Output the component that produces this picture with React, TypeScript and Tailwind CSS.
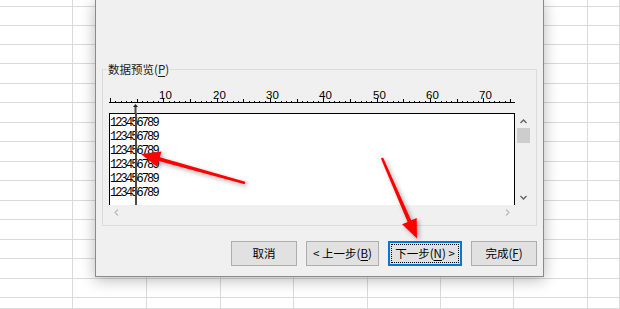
import React from "react";

const COLS = 9;
const ROWS = 17;
const ROWS_DATA = Array.from({ length: 6 }, () => "123456789");
const TICKS = Array.from({ length: 76 }, (_, i) => i);

function Ruler() {
  return (
    <svg width="408" height="27" className="block">
      <rect x="0" y="16" width="406" height="1" fill="#000" />
      {TICKS.map((i) => {
        const x = 1 + Math.round((i * 16) / 3);
        const h = i % 10 === 0 ? 4 : i % 5 === 0 ? 3 : 1;
        return <rect key={i} x={x} y={16 - h} width="1" height={h} fill="#000" />;
      })}
      {[10, 20, 30, 40, 50, 60, 70].map((n) => (
        <text
          key={n}
          x={1 + Math.round((n * 16) / 3) + 2.5}
          y="12.5"
          textAnchor="middle"
          fontSize="11.5"
          fontFamily="Liberation Sans, Arial, sans-serif"
          fill="#000"
        >
          {n}
        </text>
      ))}
      {/* column break marker */}
      <polygon points="26.5,18 24,21 29,21" fill="#222" />
      <rect x="25.5" y="21" width="2" height="6" fill="#4a4a4a" />
    </svg>
  );
}

function Chevron({ dir, color }: { dir: "up" | "down" | "left" | "right"; color: string }) {
  const pts =
    dir === "up"
      ? "0.5,4 3.5,1 6.5,4"
      : dir === "down"
      ? "0.5,1 3.5,4 6.5,1"
      : dir === "left"
      ? "4,0.5 1,3.5 4,6.5"
      : "1,0.5 4,3.5 1,6.5";
  const vertical = dir === "up" || dir === "down";
  return (
    <svg width={vertical ? 7 : 5} height={vertical ? 5 : 7} className="block">
      <polyline points={pts} fill="none" stroke={color} strokeWidth="1.3" />
    </svg>
  );
}

function Btn({ label, keyChar, rest, width, focused }: { label: string; keyChar: string; rest?: string; width: string; focused?: boolean }) {
  return (
    <div
      className={`relative flex h-[25px] items-center justify-center bg-[#e1e1e1] text-[11.5px] text-black ${width} ${
        focused ? "border-2 border-[#0078d7]" : "border border-[#adadad]"
      }`}
    >
      {focused && <div className="absolute inset-[1px] border border-dotted border-black" />}
      <span>
        {label}(<span className="underline underline-offset-2">{keyChar}</span>){rest}
      </span>
    </div>
  );
}

export default function App() {
  return (
    <div className="relative h-[309px] w-[620px] overflow-hidden bg-white font-['Noto_Sans_CJK_SC',sans-serif]">
      {/* spreadsheet grid */}
      <div className="grid h-full w-full grid-cols-[73px_74px_74px_73px_74px_73px_73px_74px_32px] grid-rows-[7px_19px_19px_19px_20px_19px_20px_19px_20px_19px_20px_19px_20px_19px_20px_19px_11px]">
        {Array.from({ length: COLS * ROWS }, (_, i) => (
          <div key={i} className="border-b border-r border-[#dadada]" />
        ))}
      </div>

      {/* dialog */}
      <div className="absolute left-[95px] top-[-1px] flex h-[278px] w-[449px] flex-col border border-[#8a8a8a] bg-[#f0f0f0] px-[6px] pb-[10px] pt-[69px] shadow-[0_3px_14px_rgba(0,0,0,0.28)]">
        <div className="relative h-[157px] w-[435px] border border-[#dcdcdc]">
          <span className="absolute left-[4px] top-[-8px] bg-[#f0f0f0] px-[1px] text-[11.5px] leading-[15px] text-[#1a1a1a]">
            数据预览(<span className="underline underline-offset-2">P</span>)
          </span>

          <div className="ml-[6px] mt-[16px]">
            <Ruler />
            <div className="grid grid-cols-[406px_16px] grid-rows-[92px_14px]">
              <div className="relative border-l border-r border-t border-black bg-white pt-[2px] font-['Liberation_Mono',monospace] text-[12px] leading-[14.1px] tracking-[-1.9px] text-black">
                {ROWS_DATA.map((r, i) => (
                  <div key={i}>{r}</div>
                ))}
                <div className="absolute bottom-0 left-[25px] top-[-1px] w-[2px] bg-[#4a4a4a]" />
              </div>
              <div className="flex flex-col items-center pb-[5px] pt-[6px]">
                <Chevron dir="up" color="#606060" />
                <div className="mt-[4px] h-[15px] w-[13px] bg-[#cdcdcd]" />
                <div className="flex-1" />
                <Chevron dir="down" color="#606060" />
              </div>
              <div className="flex items-center justify-between pl-[5px] pr-[5px]">
                <Chevron dir="left" color="#bdbdbd" />
                <Chevron dir="right" color="#bdbdbd" />
              </div>
              <div />
            </div>
          </div>
        </div>

        <div className="mt-[15px] flex justify-end gap-[9px]">
          <div className="flex h-[25px] w-[66px] items-center justify-center border border-[#adadad] bg-[#e1e1e1] text-[11.5px] text-black">
            取消
          </div>
          <Btn label="< 上一步" keyChar="B" width="w-[73px]" />
          <Btn label="下一步" keyChar="N" rest=" >" width="w-[74px]" focused />
          <Btn label="完成" keyChar="F" width="w-[66px]" />
        </div>
      </div>

      {/* red annotation arrows */}
      <svg
        width="620"
        height="309"
        className="pointer-events-none absolute left-0 top-0 drop-shadow-[2px_2px_2px_rgba(0,0,0,0.35)]"
      >
        <polygon
          points="245.3,181.8 159.8,157.2 161.5,151.4 141,154 157.2,166.8 158.8,161 244.7,184.2"
          fill="#f00"
        />
        <polygon
          points="383.1,157.5 411.2,220.3 416.7,217.9 417,238.5 402.1,224.3 407.6,221.9 380.9,158.5"
          fill="#f00"
        />
      </svg>
    </div>
  );
}
